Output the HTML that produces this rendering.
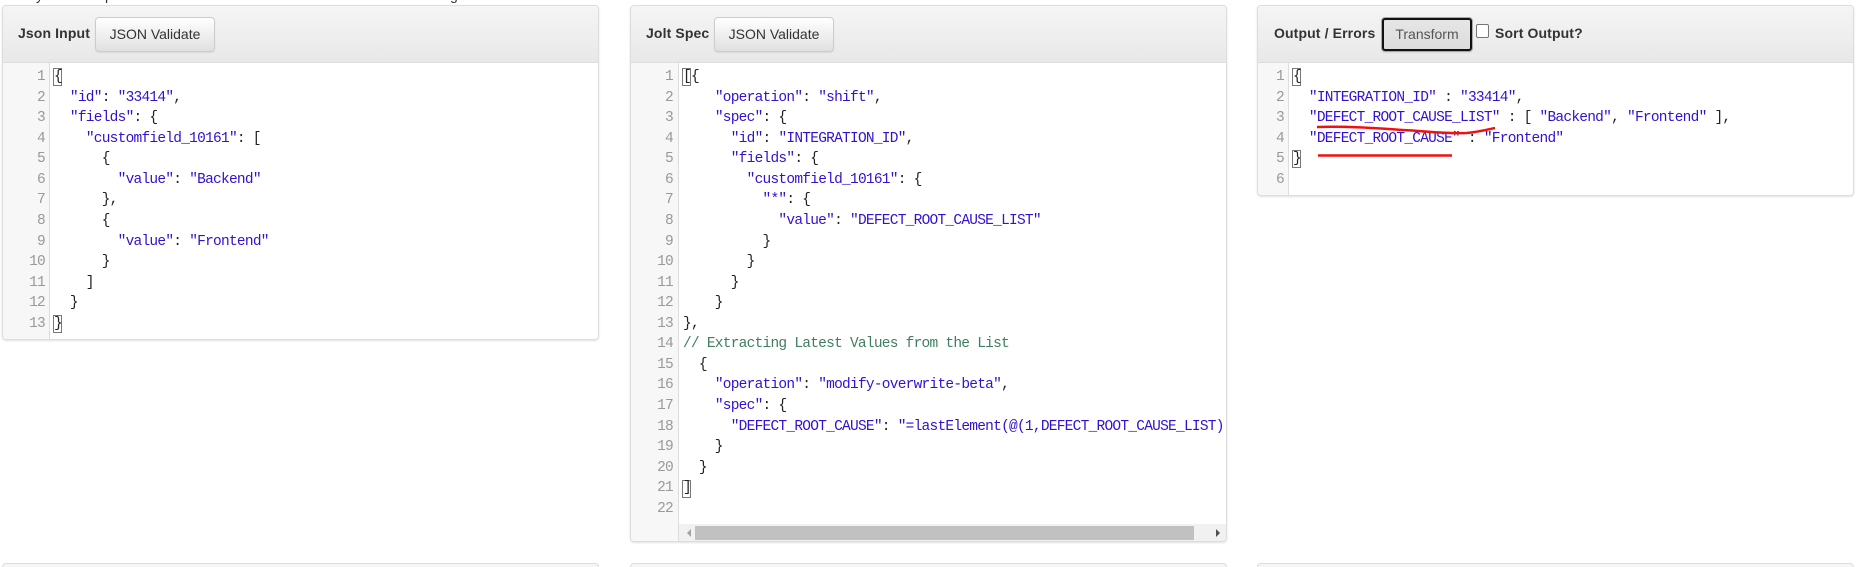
<!DOCTYPE html>
<html><head><meta charset="utf-8"><style>
html,body{margin:0;padding:0;background:#fff;width:1863px;height:567px;overflow:hidden}
#w{width:1863px;height:567px;position:relative;overflow:hidden;font-family:"Liberation Sans",sans-serif;color:#333}
.p{position:absolute;box-sizing:border-box;border:1px solid #ddd;border-radius:4px;box-shadow:0 1px 2px rgba(0,0,0,.12);background:#fff;overflow:hidden}
.q{position:absolute;box-sizing:border-box;top:563px;width:597px;height:4px;border:1px solid #ddd;border-bottom:0;border-radius:4px 4px 0 0;background:#f5f5f5}
.h{position:absolute;left:0;right:0;top:0;height:56px;background:linear-gradient(#f5f5f5,#e8e8e8);border-bottom:1px solid #ddd}
.g{position:absolute;top:57px;bottom:0;left:0;background:#f7f7f7;border-right:1px solid #ddd}
.t{position:absolute;font-size:14px;font-weight:bold;line-height:20px;top:23px;white-space:nowrap;letter-spacing:.12px}
.b{position:absolute;box-sizing:border-box;top:17px;height:35px;border:1px solid #ccc;border-radius:4px;background:linear-gradient(#fff,#e0e0e0);box-shadow:inset 0 1px 0 rgba(255,255,255,.15),0 1px 1px rgba(0,0,0,.075);font-size:14px;line-height:33px;text-align:center;color:#333}
pre{position:absolute;margin:0;top:67px;font-family:"Liberation Mono",monospace;font-size:14.5px;letter-spacing:-.75px;line-height:20.57px;white-space:pre}
pre.n{color:#999;text-align:right}
pre.c{color:#222}
pre.c i{font-style:normal;color:#3410d0}
pre.c u{text-decoration:none;color:#3f7f5f}
.m{position:absolute;box-sizing:border-box;width:9px;height:18px;border:1px solid #777}
.tail{position:absolute;font-size:14px;line-height:14px;top:-12px;color:#333}
</style></head><body><div id="w">
<span class="tail" style="left:36px">y</span><span class="tail" style="left:105px">p</span><span class="tail" style="left:450px">g</span>

<div class="p" style="left:2px;top:5px;width:597px;height:335px">
<div class="h"></div><div class="g" style="width:46px"></div>
</div>
<div class="t" style="left:18px">Json Input</div>
<div class="b" style="left:95px;width:120px">JSON Validate</div>
<pre class="n" style="left:3px;width:42px">1
2
3
4
5
6
7
8
9
10
11
12
13</pre>
<div class="m" style="left:53px;top:68px"></div><div class="m" style="left:53px;top:315px"></div>
<pre class="c" style="left:54px">{
  <i>"id"</i>: <i>"33414"</i>,
  <i>"fields"</i>: {
    <i>"customfield_10161"</i>: [
      {
        <i>"value"</i>: <i>"Backend"</i>
      },
      {
        <i>"value"</i>: <i>"Frontend"</i>
      }
    ]
  }
}</pre>

<div class="p" style="left:630px;top:5px;width:597px;height:537px">
<div class="h"></div><div class="g" style="width:47px"></div>
<div style="position:absolute;left:48px;right:0;top:518px;height:18px;background:#f1f1f1"></div>
<div style="position:absolute;left:64px;top:520px;width:499px;height:14px;background:#c1c1c1"></div>
<svg style="position:absolute;left:48px;top:518px" width="548" height="18"><path d="M12 5v8l-4-4z" fill="#a3a3a3"/><path d="M537 5v8l4-4z" fill="#505050"/></svg>
</div>
<div class="t" style="left:646px">Jolt Spec</div>
<div class="b" style="left:714px;width:120px">JSON Validate</div>
<pre class="n" style="left:631px;width:42px">1
2
3
4
5
6
7
8
9
10
11
12
13
14
15
16
17
18
19
20
21
22</pre>
<div class="m" style="left:682px;top:68px"></div><div class="m" style="left:682px;top:480px"></div>
<div style="position:absolute;left:683px;top:60px;width:543px;height:460px;overflow:hidden">
<pre class="c" style="left:0;top:7px">[{
    <i>"operation"</i>: <i>"shift"</i>,
    <i>"spec"</i>: {
      <i>"id"</i>: <i>"INTEGRATION_ID"</i>,
      <i>"fields"</i>: {
        <i>"customfield_10161"</i>: {
          <i>"*"</i>: {
            <i>"value"</i>: <i>"DEFECT_ROOT_CAUSE_LIST"</i>
          }
        }
      }
    }
},
<u>// Extracting Latest Values from the List</u>
  {
    <i>"operation"</i>: <i>"modify-overwrite-beta"</i>,
    <i>"spec"</i>: {
      <i>"DEFECT_ROOT_CAUSE"</i>: <i>"=lastElement(@(1,DEFECT_ROOT_CAUSE_LIST))"</i>
    }
  }
]
</pre></div>

<div class="p" style="left:1257px;top:5px;width:597px;height:191px">
<div class="h"></div><div class="g" style="width:30px"></div>
</div>
<div class="t" style="left:1274px">Output / Errors</div>
<div class="b" style="left:1381px;width:92px;background:linear-gradient(#e6e6e6,#dcdcdc);border:1px solid #aaa;outline:2px solid #111;outline-offset:-3px;color:#555">Transform</div>
<div style="position:absolute;box-sizing:border-box;left:1476px;top:24px;width:13px;height:14px;background:#fff;border:1px solid #767676;border-radius:2px"></div>
<div class="t" style="left:1495px">Sort Output?</div>
<pre class="n" style="left:1259px;width:25px">1
2
3
4
5
6</pre>
<div class="m" style="left:1292px;top:68px"></div><div class="m" style="left:1292px;top:150px"></div>
<pre class="c" style="left:1293px">{
  <i>"INTEGRATION_ID"</i> : <i>"33414"</i>,
  <i>"DEFECT_ROOT_CAUSE_LIST"</i> : [ <i>"Backend"</i>, <i>"Frontend"</i> ],
  <i>"DEFECT_ROOT_CAUSE"</i> : <i>"Frontend"</i>
}
</pre>
<svg style="position:absolute;left:0;top:0;display:block" width="1863" height="567" fill="none" stroke="#f01010" stroke-width="2.500"><path d="M1317 127C1345 126 1375 128 1403 130C1425 131 1445 134 1467 133C1478 132 1486 130 1495 128"/><path d="M1318 155.500H1452"/></svg>

<div class="q" style="left:2px"></div>
<div class="q" style="left:630px"></div>
<div class="q" style="left:1257px"></div>
</div></body></html>
